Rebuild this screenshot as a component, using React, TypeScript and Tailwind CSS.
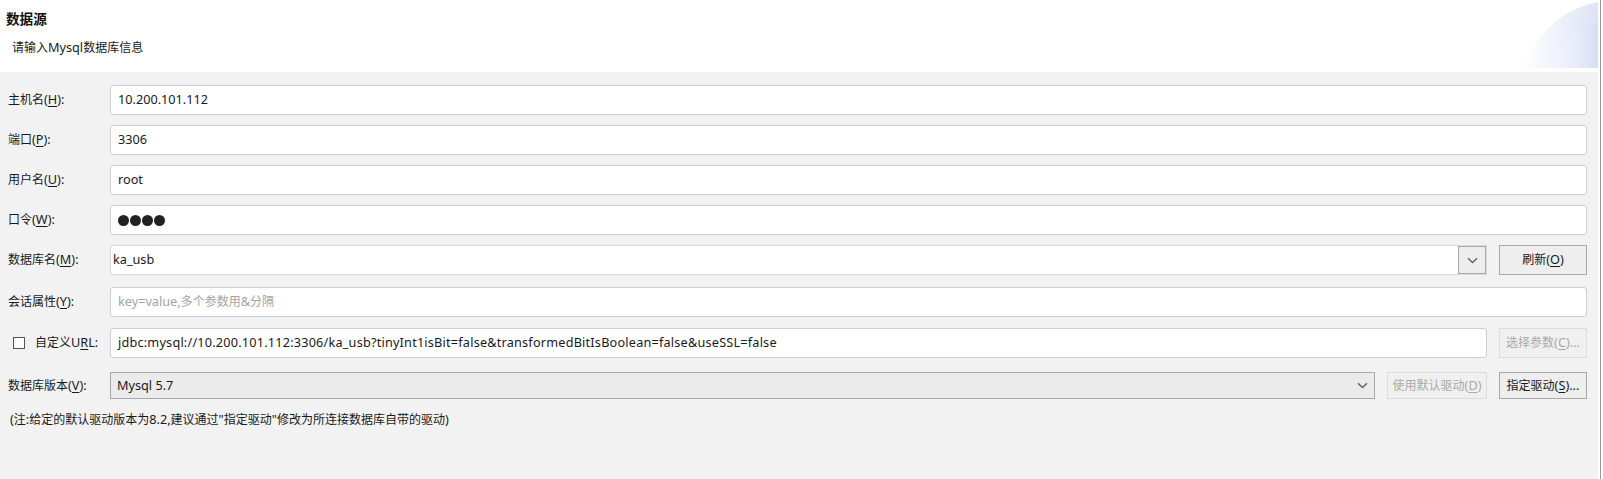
import { Children, type ReactNode } from "react";

const FONT = { fontFamily: '"Noto Sans", "Noto Sans CJK SC", sans-serif' };
const CJK_RUN = /([\u3000-\u303f\u4e00-\u9fff\uff00-\uffef]+)/;

// 中文字形比西文略小一点，按字符段拆开分别设字号
function T({ children }: { children: ReactNode }) {
  return (
    <>
      {Children.map(children, (c) =>
        typeof c === "string"
          ? c.split(CJK_RUN).map((part, i) =>
              CJK_RUN.test(part) ? (
                <span key={i} className="text-[12px]">
                  {part}
                </span>
              ) : (
                part
              ),
            )
          : c,
      )}
    </>
  );
}

function Mn({ children }: { children: ReactNode }) {
  return <span className="underline underline-offset-2">{children}</span>;
}

function Chevron() {
  return (
    <svg width="11" height="7" viewBox="0 0 11 7" fill="none">
      <path d="M1 1.2 L5.5 5.5 L10 1.2" stroke="#5f6368" strokeWidth="1.4" />
    </svg>
  );
}

function Label({ children }: { children: ReactNode }) {
  return (
    <div className="w-[102px] shrink-0 whitespace-nowrap text-[12.7px] text-[#1a1a1a]">
      <T>{children}</T>
    </div>
  );
}

function TextBox({ value, placeholder, wide }: { value?: string; placeholder?: string; wide?: boolean }) {
  return (
    <div className="flex h-full min-w-0 flex-1 items-center whitespace-nowrap rounded-[3px] border border-[#c8cedb] bg-white px-[7px] text-[12.7px]">
      {value ? (
        <span className={wide ? "tracking-[0.2px] text-[#1a1a1a]" : "text-[#1a1a1a]"}>{value}</span>
      ) : (
        <span className="text-[#a3a3a3]">
          <T>{placeholder}</T>
        </span>
      )}
    </div>
  );
}

function Button({ children, disabled, w }: { children: ReactNode; disabled?: boolean; w: string }) {
  return (
    <div
      className={
        disabled
          ? `${w} ml-[12px] flex h-full shrink-0 items-center justify-center whitespace-nowrap border border-[#dcdcdc] bg-[#f0f0f0] text-[12.7px] text-[#a9a9a9]`
          : `${w} ml-[12px] flex h-full shrink-0 items-center justify-center whitespace-nowrap border border-[#a8a8a8] bg-[#eeeeee] text-[12.7px] text-[#1a1a1a]`
      }
    >
      <T>{children}</T>
    </div>
  );
}

export default function App() {
  return (
    <div className="flex h-[479px] w-[1603px] bg-white" style={FONT}>
      <div className="flex w-[1598px] flex-col">
        {/* 标题区 */}
        <div className="relative h-[72px] shrink-0 bg-white">
          <div className="pl-[6px] pt-[9px] text-[13.6px] font-bold leading-[20px] text-[#111]">数据源</div>
          <div className="pl-[12px] pt-[9px] text-[12.7px] leading-[18px] text-[#1a1a1a]">
            <T>请输入Mysql数据库信息</T>
          </div>
          <svg className="absolute right-0 top-0" width="100" height="68" viewBox="0 0 100 68">
            <defs>
              <linearGradient id="g1" x1="0" y1="0" x2="1" y2="0">
                <stop offset="0" stopColor="#ffffff" />
                <stop offset="1" stopColor="#dce3f5" />
              </linearGradient>
              <linearGradient id="g2" x1="0" y1="0" x2="1" y2="0">
                <stop offset="0" stopColor="#ffffff" stopOpacity="0" />
                <stop offset="1" stopColor="#d6def3" />
              </linearGradient>
            </defs>
            <path d="M24 68 Q48 12 100 2 L100 68 Z" fill="url(#g1)" />
            <path d="M50 68 Q64 30 100 22 L100 68 Z" fill="url(#g2)" />
          </svg>
        </div>

        {/* 表单区 */}
        <div className="flex flex-1 flex-col bg-[#f2f2f2] pl-[8px] pr-[11px] pt-[13px]">
          <div className="flex h-[30px] items-center">
            <Label>
              主机名(<Mn>H</Mn>):
            </Label>
            <TextBox value="10.200.101.112" />
          </div>
          <div className="mt-[10px] flex h-[30px] items-center">
            <Label>
              端口(<Mn>P</Mn>):
            </Label>
            <TextBox value="3306" />
          </div>
          <div className="mt-[10px] flex h-[30px] items-center">
            <Label>
              用户名(<Mn>U</Mn>):
            </Label>
            <TextBox value="root" />
          </div>
          <div className="mt-[10px] flex h-[30px] items-center">
            <Label>
              口令(<Mn>W</Mn>):
            </Label>
            <div className="flex h-full flex-1 items-center gap-[1px] rounded-[3px] border border-[#c8cedb] bg-white px-[7px]">
              {[0, 1, 2, 3].map((i) => (
                <span key={i} className="h-[11px] w-[11px] rounded-full bg-[#222]" />
              ))}
            </div>
          </div>
          <div className="mt-[10px] flex h-[30px] items-center">
            <Label>
              数据库名(<Mn>M</Mn>):
            </Label>
            <div className="flex h-full flex-1 items-center border border-[#d9d9d9] bg-white pl-[2px] text-[12.7px] text-[#1a1a1a]">
              <span className="flex-1">ka_usb</span>
              <div className="flex h-[28px] w-[28px] items-center justify-center border border-[#a9a9a9] bg-[#ededed]">
                <Chevron />
              </div>
            </div>
            <Button w="w-[88px]">
              刷新(<Mn>O</Mn>)
            </Button>
          </div>
          <div className="mt-[12px] flex h-[30px] items-center">
            <Label>
              会话属性(<Mn>Y</Mn>):
            </Label>
            <TextBox placeholder="key=value,多个参数用&分隔" />
          </div>
          <div className="mt-[11px] flex h-[30px] items-center">
            <div className="flex w-[102px] shrink-0 items-center whitespace-nowrap text-[12.7px] text-[#1a1a1a]">
              <span className="ml-[5px] mr-[10px] h-[12px] w-[12px] border border-[#555] bg-white" />
              <span>
                <T>自定义</T>U<Mn>R</Mn>L:
              </span>
            </div>
            <TextBox wide value="jdbc:mysql://10.200.101.112:3306/ka_usb?tinyInt1isBit=false&transformedBitIsBoolean=false&useSSL=false" />
            <Button disabled w="w-[88px]">
              选择参数(<Mn>C</Mn>)...
            </Button>
          </div>
          <div className="mt-[14px] flex h-[27px] items-center">
            <Label>
              数据库版本(<Mn>V</Mn>):
            </Label>
            <div className="flex h-full flex-1 items-center border border-[#a8a8a8] bg-[#ebebeb] pl-[6px] pr-[6px] text-[12.7px] text-[#1a1a1a]">
              <span className="flex-1">Mysql 5.7</span>
              <Chevron />
            </div>
            <Button disabled w="w-[100px]">
              使用默认驱动(<Mn>D</Mn>)
            </Button>
            <Button w="w-[88px]">
              指定驱动(<Mn>S</Mn>)...
            </Button>
          </div>
          <div className="mt-[11px] whitespace-nowrap pl-[2px] text-[12.7px] leading-[18px] text-[#1a1a1a]">
            <T>(注:给定的默认驱动版本为8.2,建议通过"指定驱动"修改为所连接数据库自带的驱动)</T>
          </div>
        </div>
      </div>
      <div className="w-[2px] bg-white" />
      <div className="w-px bg-[#9c9c9c]" />
      <div className="flex-1 bg-white" />
    </div>
  );
}
